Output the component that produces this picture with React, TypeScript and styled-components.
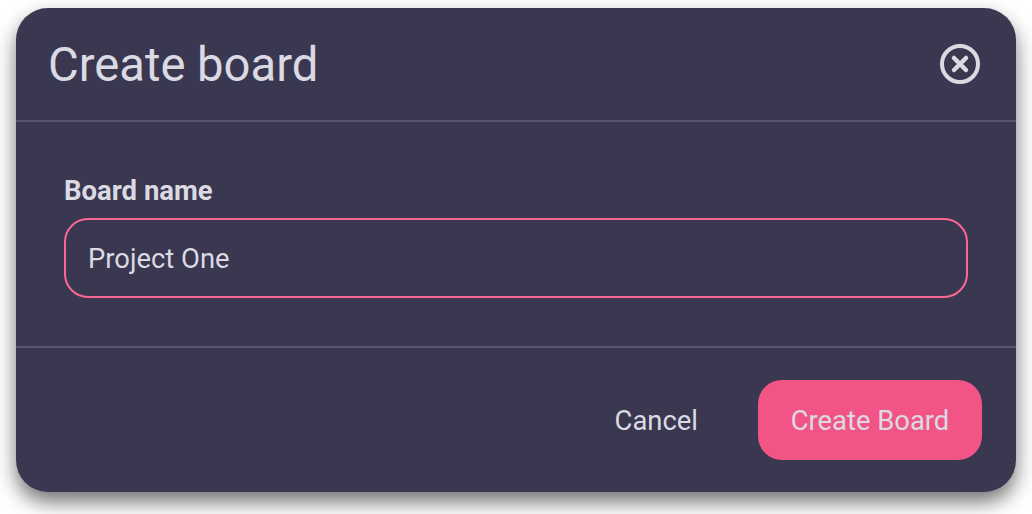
import React from "react";
import styled, { createGlobalStyle } from "styled-components";

const GlobalStyle = createGlobalStyle`
    html, body {
        margin: 0;
        padding: 0;
        background: #ffffff;
        font-family: Roboto, "Liberation Sans", sans-serif;
    }
`;

const Page = styled.div`
    width: 1032px;
    height: 514px;
    padding: 8px 16px 0;
    box-sizing: border-box;
    overflow: hidden;
`;

const Modal = styled.div`
    width: 1000px;
    height: 484px;
    display: flex;
    flex-direction: column;
    background: #3a3750;
    border-radius: 32px;
    box-shadow: 0 10px 20px rgba(0, 0, 0, 0.55);
    color: #dbdae3;
`;

const Header = styled.div`
    height: 114px;
    box-sizing: border-box;
    padding: 0 36px 0 32px;
    display: flex;
    align-items: center;
    justify-content: space-between;
    border-bottom: 2px solid #57546b;
`;

const Title = styled.h2`
    margin: 0;
    padding-top: 1px;
    font-size: 47.2px;
    font-weight: 400;
    line-height: 58px;
`;

const CloseButton = styled.button`
    width: 40px;
    height: 40px;
    padding: 0;
    border: 0;
    background: none;
    color: #dbdae3;
    display: block;
`;

const Body = styled.div`
    height: 226px;
    box-sizing: border-box;
    padding: 54px 48px 0;
    border-bottom: 2px solid #57546b;
`;

const Label = styled.label`
    display: block;
    font-size: 27.5px;
    font-weight: 700;
    line-height: 30px;
    margin-bottom: 12px;
`;

const Input = styled.input`
    display: block;
    width: 100%;
    height: 80px;
    box-sizing: border-box;
    padding: 2px 22px 0;
    border: 2px solid #fb6794;
    border-radius: 24px;
    outline: none;
    background: transparent;
    color: #dbdae3;
    font-family: inherit;
    font-size: 27.4px;
    font-weight: 400;
`;

const Footer = styled.div`
    flex: 1;
    box-sizing: border-box;
    padding: 32px 34px 0 0;
    display: flex;
    justify-content: flex-end;
    align-items: flex-start;
    gap: 60px;
`;

const Button = styled.button<{ $primary?: boolean }>`
    height: 80px;
    padding: 2px 0 0;
    width: ${(p) => (p.$primary ? "224px" : "auto")};
    border: 0;
    border-radius: 24px;
    background: ${(p) => (p.$primary ? "#f25585" : "transparent")};
    color: #dbdae3;
    font-family: inherit;
    font-size: 27.4px;
    font-weight: 400;
`;

export default function App() {
    return (
        <Page>
            <GlobalStyle />
            <Modal>
                <Header>
                    <Title>Create board</Title>
                    <CloseButton aria-label="Close">
                        <svg width="40" height="40" viewBox="0 0 40 40" fill="none" stroke="currentColor">
                            <circle cx="20" cy="20" r="18" strokeWidth="4" />
                            <path d="M14 14 L26 26 M26 14 L14 26" strokeWidth="4.5" strokeLinecap="round" />
                        </svg>
                    </CloseButton>
                </Header>
                <Body>
                    <Label htmlFor="board-name">Board name</Label>
                    <Input id="board-name" defaultValue="Project One" />
                </Body>
                <Footer>
                    <Button>Cancel</Button>
                    <Button $primary>Create Board</Button>
                </Footer>
            </Modal>
        </Page>
    );
}
